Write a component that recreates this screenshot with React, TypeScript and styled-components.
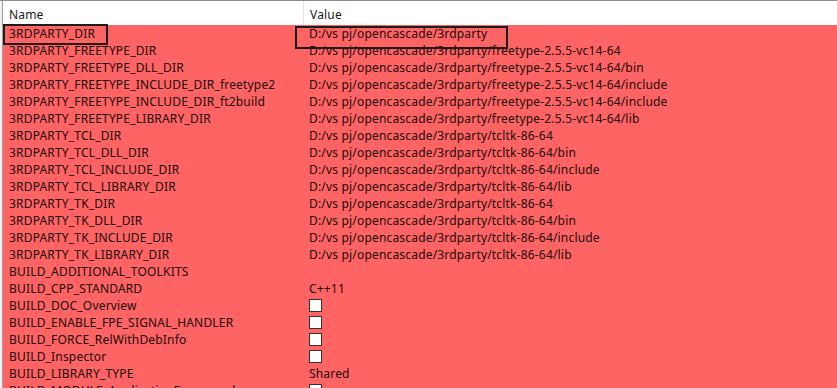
import React from "react";
import styled, { createGlobalStyle } from "styled-components";

const GlobalStyle = createGlobalStyle`
  html, body {
    margin: 0;
    padding: 0;
    background: #f0f0f0;
  }
  body {
    font-family: "Noto Sans", "Noto Sans CJK SC", sans-serif;
    font-size: 12px;
    letter-spacing: 0.18px;
    color: #111;
  }
`;

const Frame = styled.div`
  position: relative;
  width: 837px;
  height: 388px;
  overflow: hidden;
  box-sizing: border-box;
  border-top: 1px solid #878c94;
  padding-left: 2px;
  background: #f0f0f0;
`;

const Table = styled.div`
  border-left: 1px solid #a0a0a0;
  height: 100%;
  background: #ffffff;
`;

const HeaderRow = styled.div`
  display: grid;
  grid-template-columns: 301px 1fr;
  height: 24px;
  background: #ffffff;
`;

const HeaderCell = styled.div<{ $divider?: boolean }>`
  display: flex;
  align-items: center;
  padding-left: 6px;
  padding-top: 2px;
  color: #1a1a1a;
  border-right: ${(p) => (p.$divider ? "1px solid #e5e5e5" : "none")};
`;

const Row = styled.div`
  display: grid;
  grid-template-columns: 301px 1fr;
  height: 17px;
  background: #ff6464;
`;

const Cell = styled.div`
  display: flex;
  align-items: center;
  padding-left: 6px;
  white-space: nowrap;
  overflow: hidden;
  color: #1a0a0a;
`;

const ValueCell = styled(Cell)`
  padding-left: 5px;
`;

const Check = styled.span`
  display: inline-block;
  width: 11px;
  height: 11px;
  border: 1px solid #333333;
  background: #ffffff;
`;

const Marker = styled.div<{ $x: number; $y: number; $w: number; $h: number }>`
  position: absolute;
  left: ${(p) => p.$x}px;
  top: ${(p) => p.$y}px;
  width: ${(p) => p.$w}px;
  height: ${(p) => p.$h}px;
  box-sizing: border-box;
  border: 2px solid #1c1c1c;
  pointer-events: none;
`;

type Entry = { name: string; value?: string; check?: boolean };

const base = "D:/vs pj/opencascade/3rdparty";
const ft = base + "/freetype-2.5.5-vc14-64";
const tk = base + "/tcltk-86-64";

const entries: Entry[] = [
  { name: "3RDPARTY_DIR", value: base },
  { name: "3RDPARTY_FREETYPE_DIR", value: ft },
  { name: "3RDPARTY_FREETYPE_DLL_DIR", value: ft + "/bin" },
  { name: "3RDPARTY_FREETYPE_INCLUDE_DIR_freetype2", value: ft + "/include" },
  { name: "3RDPARTY_FREETYPE_INCLUDE_DIR_ft2build", value: ft + "/include" },
  { name: "3RDPARTY_FREETYPE_LIBRARY_DIR", value: ft + "/lib" },
  { name: "3RDPARTY_TCL_DIR", value: tk },
  { name: "3RDPARTY_TCL_DLL_DIR", value: tk + "/bin" },
  { name: "3RDPARTY_TCL_INCLUDE_DIR", value: tk + "/include" },
  { name: "3RDPARTY_TCL_LIBRARY_DIR", value: tk + "/lib" },
  { name: "3RDPARTY_TK_DIR", value: tk },
  { name: "3RDPARTY_TK_DLL_DIR", value: tk + "/bin" },
  { name: "3RDPARTY_TK_INCLUDE_DIR", value: tk + "/include" },
  { name: "3RDPARTY_TK_LIBRARY_DIR", value: tk + "/lib" },
  { name: "BUILD_ADDITIONAL_TOOLKITS", value: "" },
  { name: "BUILD_CPP_STANDARD", value: "C++11" },
  { name: "BUILD_DOC_Overview", check: true },
  { name: "BUILD_ENABLE_FPE_SIGNAL_HANDLER", check: true },
  { name: "BUILD_FORCE_RelWithDebInfo", check: true },
  { name: "BUILD_Inspector", check: true },
  { name: "BUILD_LIBRARY_TYPE", value: "Shared" },
  { name: "BUILD_MODULE_ApplicationFramework", check: true },
];

export default function App() {
  return (
    <>
      <GlobalStyle />
      <Frame>
        <Table>
          <HeaderRow>
            <HeaderCell $divider>Name</HeaderCell>
            <HeaderCell>Value</HeaderCell>
          </HeaderRow>
          {entries.map((e) => (
            <Row key={e.name}>
              <Cell>{e.name}</Cell>
              <ValueCell>{e.check ? <Check /> : e.value}</ValueCell>
            </Row>
          ))}
        </Table>
        <Marker $x={3} $y={23} $w={105} $h={21} />
        <Marker $x={295} $y={25} $w={213} $h={23} />
      </Frame>
    </>
  );
}
